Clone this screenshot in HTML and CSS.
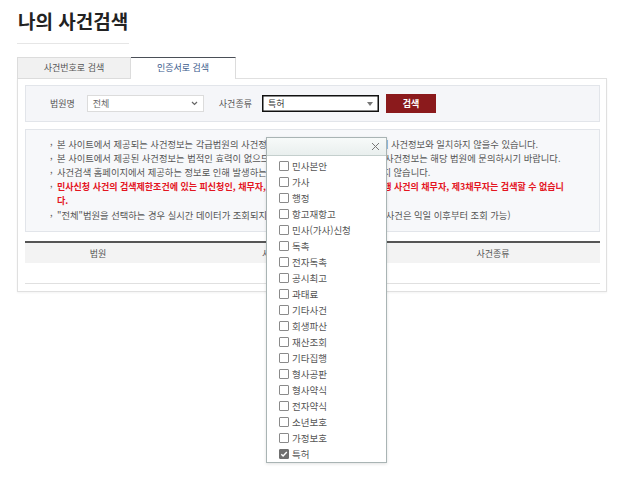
FILE: index.html
```html
<!DOCTYPE html>
<html lang="ko">
<head>
    <meta charset="UTF-8">
    <meta name="viewport" content="width=device-width, initial-scale=1.0">
    <title>나의 사건검색</title>
    <link rel="stylesheet" href="styles.css">
</head>
<body>
    <div class="page">
        <h1 class="page-title">나의 사건검색</h1>

        <ul class="tabs">
            <li class="tab">사건번호로 검색</li>
            <li class="tab active">인증서로 검색</li>
        </ul>

        <div class="panel">
            <div class="search-box">
                <span class="field-label">법원명</span>
                <div class="select court-select">
                    <span>전체</span>
                    <svg width="7" height="5" viewBox="0 0 7 5"><path d="M1 1l2.5 2.5L6 1" fill="none" stroke="#666" stroke-width="1.2"/></svg>
                </div>
                <span class="field-label kind-label">사건종류</span>
                <div class="select kind-select">
                    <span>특허</span>
                    <svg width="6" height="4" viewBox="0 0 6 4"><path d="M0 0h6L3 4z" fill="#777"/></svg>
                </div>
                <button class="search-btn">검색</button>
            </div>

            <ul class="notice">
                <li>본 사이트에서 제공되는 사건정보는 각급법원의 사건정보 시스템에 보관되어 있는 실제 사건정보와 일치하지 않을수 있습니다.</li>
                <li>본 사이트에서 제공된 사건정보는 법적인 효력이 없으므로, 참고로만 활용하고 정확한 사건정보는 해당 법원에 문의하시기 바랍니다.</li>
                <li>사건검색 홈페이지에서 제공하는 정보로 인해 발생하는 문제에 대해 법원은 책임을 지지 않습니다.</li>
                <li class="warn">민사신청 사건의 검색제한조건에 있는 피신청인, 채무자, 제3채무자 및 가압류 등 민사집행 사건의 채무자, 제3채무자는 검색할 수 없습니다.</li>
                <li>"전체"법원을 선택하는 경우 실시간 데이터가 조회되지 않습니다.(당일 신규로 접수된 사건은 익일 이후부터 조회 가능)</li>
            </ul>

            <table class="result">
                <colgroup>
                    <col class="col-court">
                    <col class="col-number">
                    <col class="col-kind">
                </colgroup>
                <thead>
                    <tr><th>법원</th><th>사건번호</th><th>사건종류</th></tr>
                </thead>
                <tbody>
                    <tr><td colspan="3">조회된 결과가 없습니다.</td></tr>
                </tbody>
            </table>
        </div>

        <div class="kind-popup">
            <div class="popup-head">
                <svg class="popup-close" width="9" height="9" viewBox="0 0 9 9"><path d="M1 1l7 7M8 1L1 8" stroke="#777" stroke-width="1"/></svg>
            </div>
            <ul class="kind-list">
                <li><span class="check"></span>민사본안</li>
                <li><span class="check"></span>가사</li>
                <li><span class="check"></span>행정</li>
                <li><span class="check"></span>항고재항고</li>
                <li><span class="check"></span>민사(가사)신청</li>
                <li><span class="check"></span>독촉</li>
                <li><span class="check"></span>전자독촉</li>
                <li><span class="check"></span>공시최고</li>
                <li><span class="check"></span>과태료</li>
                <li><span class="check"></span>기타사건</li>
                <li><span class="check"></span>회생파산</li>
                <li><span class="check"></span>재산조회</li>
                <li><span class="check"></span>기타집행</li>
                <li><span class="check"></span>형사공판</li>
                <li><span class="check"></span>형사약식</li>
                <li><span class="check"></span>전자약식</li>
                <li><span class="check"></span>소년보호</li>
                <li><span class="check"></span>가정보호</li>
                <li><span class="check checked"><svg width="8" height="8" viewBox="0 0 8 8"><path d="M1.3 4.2l1.8 1.8L6.8 2" fill="none" stroke="#fff" stroke-width="1.4"/></svg></span>특허</li>
            </ul>
        </div>
    </div>
</body>
</html>
```

FILE: styles.css
```css
body {
    margin: 0;
    background: #fff;
    color: #555;
    font-family: "Noto Sans CJK KR", "Noto Sans", sans-serif;
    font-size: 9px;
}
ul {
    margin: 0;
    padding: 0;
    list-style: none;
}
.page {
    position: relative;
    padding-left: 17px;
    width: 590px;
    min-height: 480px;
}
.page-title {
    margin: 0;
    width: 111px;
    padding: 7px 0 8px 1px;
    line-height: 28px;
    font-size: 19px;
    font-weight: bold;
    color: #222;
    border-bottom: 1px solid #e6e6e6;
    white-space: nowrap;
}
.tabs {
    display: flex;
    margin-top: 13px;
    height: 22px;
    position: relative;
    z-index: 1;
}
.tab {
    box-sizing: border-box;
    height: 22px;
    line-height: 20px;
    text-align: center;
    color: #555;
}
.tabs .tab:first-child {
    width: 114px;
    background: #f1f1f1;
    border: 1px solid #dcdcdc;
}
.tab.active {
    width: 105px;
    background: #fff;
    border-top: 1px solid #4a4f57;
    border-right: 1px solid #dcdcdc;
    color: #3b5b8c;
}
.panel {
    margin-top: -1px;
    border: 1px solid #e0e0e0;
    padding: 6px 6px 7px 7px;
    box-shadow: 0 1px 2px rgba(0, 0, 0, 0.05);
}
.search-box {
    display: flex;
    align-items: center;
    height: 35px;
    padding-left: 24px;
    background: #f5f6f9;
    border: 1px solid #e2e5ea;
}
.field-label {
    color: #555;
    margin-right: 12px;
}
.kind-label {
    margin-left: 15px;
    margin-right: 10px;
}
.select {
    box-sizing: border-box;
    display: flex;
    align-items: center;
    justify-content: space-between;
    width: 117px;
    height: 17px;
    padding: 0 5px 0 5px;
    background: #fff;
    border: 1px solid #dcdcdc;
    color: #666;
}
.kind-select {
    border: 1px solid #111;
    box-shadow: inset 0 0 0 0.5px #111;
    color: #333;
}
.search-btn {
    margin-left: 7px;
    width: 50px;
    height: 19px;
    padding: 0;
    border: none;
    background: #8b1a1c;
    color: #fff;
    font-family: inherit;
    font-size: 9px;
    font-weight: bold;
}
.notice {
    margin-top: 7px;
    padding: 7px 34px 9px 24px;
    background: #f7f8fa;
    border: 1px solid #e2e5ea;
    line-height: 14.2px;
    font-size: 9.3px;
}
.notice li {
    position: relative;
    padding-left: 7px;
    color: #555;
}
.notice li::before {
    content: ",";
    position: absolute;
    left: 0;
    top: -3px;
    color: #666;
    font-weight: normal;
}
.notice .warn {
    color: #e4151f;
    font-weight: bold;
    font-size: 9px;
}
.result {
    width: 100%;
    margin-top: 9px;
    border-collapse: collapse;
    border-top: 2px solid #555;
}
.col-court {
    width: 146px;
}
.col-number {
    width: 215px;
}
.result th {
    height: 20px;
    padding: 0;
    background: #f3f3f3;
    font-weight: normal;
    color: #555;
}
.result td {
    height: 20px;
    padding: 0;
    text-align: center;
    border-bottom: 1px solid #e0e0e0;
}
.kind-popup {
    position: absolute;
    left: 266px;
    top: 137px;
    z-index: 5;
    box-sizing: border-box;
    width: 121px;
    height: 326px;
    background: #fff;
    border: 1px solid #a9b4b4;
    box-shadow: 0 1px 3px rgba(0, 0, 0, 0.12);
}
.popup-head {
    display: flex;
    justify-content: flex-end;
    align-items: center;
    height: 17px;
    padding-right: 6px;
    background: linear-gradient(#f7faf9, #e9efee);
    border-bottom: 1px solid #c4cfcd;
}
.kind-list {
    padding: 2px 0 0 12px;
}
.kind-list li {
    display: flex;
    align-items: center;
    height: 16px;
    color: #555;
    font-size: 9.5px;
}
.check {
    box-sizing: border-box;
    display: flex;
    align-items: center;
    justify-content: center;
    width: 10px;
    height: 10px;
    margin-right: 3px;
    border: 1px solid #8a8a8a;
    border-radius: 1px;
    background: #fff;
}
.check.checked {
    background: #6f6f6f;
    border-color: #6f6f6f;
}
```
